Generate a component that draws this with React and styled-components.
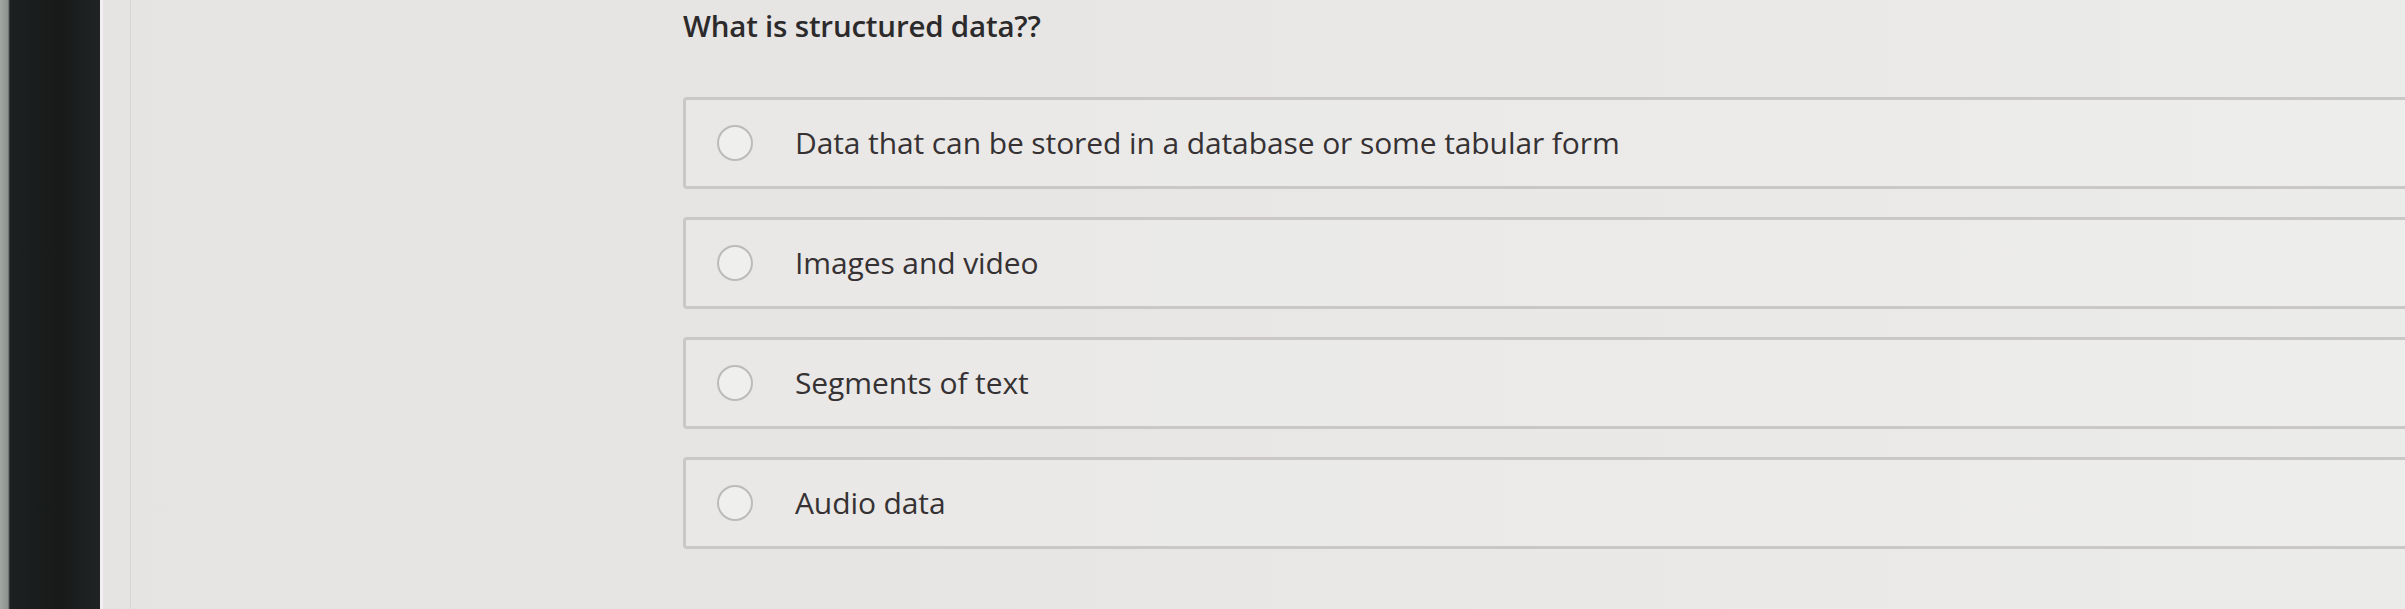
import React from "react";
import styled, { createGlobalStyle } from "styled-components";

const Global = createGlobalStyle`
  html, body { margin: 0; padding: 0; background: #1b1d1d; overflow: hidden; }
  body { font-family: "Open Sans", "DejaVu Sans", sans-serif; }
  #root { width: 2405px; height: 609px; }
`;

const Frame = styled.div`
  display: flex;
  width: 2405px;
  height: 609px;
  overflow: hidden;
`;

const Bezel = styled.div`
  width: 100px;
  flex: none;
  background: linear-gradient(90deg, #a3a7a4 0px, #8d918f 8px, #1d2020 10px, #181a1a 60px, #202323 96px);
  border-right: 3px solid #f4eef2;
`;

const Screen = styled.main`
  flex: 1;
  display: flex;
  background: linear-gradient(90deg, #e5e4e2 0%, #e6e5e3 30%, #e9e8e6 60%, #ebebe9 100%);
  overflow: hidden;
`;

const Gutter = styled.div`
  width: 27px;
  flex: none;
  border-right: 1px solid #d6d5d3;
`;

const Content = styled.section`
  flex: 1;
  display: flex;
  flex-direction: column;
  padding: 6px 0 0 552px;
  margin-right: -40px;
`;

const Question = styled.h2`
  margin: 0 0 51px 0;
  font-family: "Open Sans", sans-serif;
  font-weight: 600;
  font-size: 29.5px;
  line-height: 40px;
  color: #2c2a2b;
  letter-spacing: -0.2px;
`;

const Options = styled.div`
  display: flex;
  flex-direction: column;
  gap: 28px;
`;

const Option = styled.label`
  display: flex;
  align-items: center;
  height: 92px;
  box-sizing: border-box;
  border: 3px solid #c9c8c7;
  border-radius: 4px;
  padding-left: 31px;
  background: rgba(255, 255, 255, 0.12);
`;

const Radio = styled.span`
  width: 36px;
  height: 36px;
  box-sizing: border-box;
  border-radius: 50%;
  border: 2px solid #bcbbbb;
  background: #efefee;
  flex: none;
  margin-right: 42px;
`;

const OptionText = styled.span`
  font-family: "Open Sans", sans-serif;
  font-weight: 400;
  font-size: 30px;
  line-height: 40px;
  color: #363234;
  letter-spacing: -0.1px;
`;

const options = [
  "Data that can be stored in a database or some tabular form",
  "Images and video",
  "Segments of text",
  "Audio data",
];

export default function App() {
  return (
    <>
      <Global />
      <Frame>
        <Bezel />
        <Screen>
          <Gutter />
          <Content>
            <Question>What is structured data??</Question>
            <Options>
              {options.map((o) => (
                <Option key={o}>
                  <Radio />
                  <OptionText>{o}</OptionText>
                </Option>
              ))}
            </Options>
          </Content>
        </Screen>
      </Frame>
    </>
  );
}
